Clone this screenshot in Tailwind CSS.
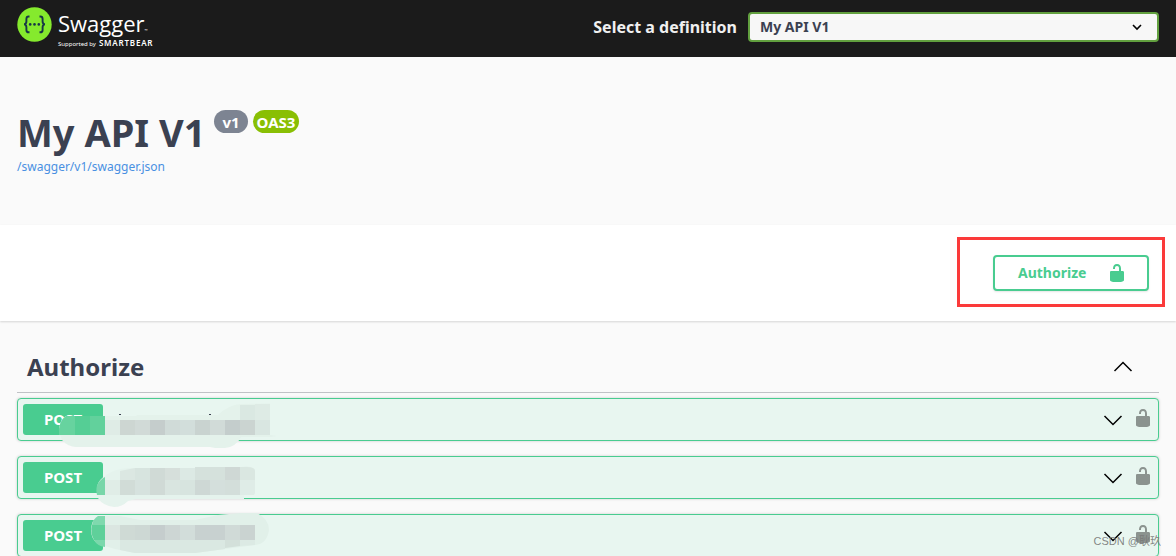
<!DOCTYPE html>
<html lang="en">
<head>
  <meta charset="UTF-8">
  <meta name="viewport" content="width=device-width, initial-scale=1">
  <title>Swagger UI</title>
  <script src="https://cdn.jsdelivr.net/npm/@tailwindcss/browser@4"></script>
</head>
<body class="relative h-screen overflow-hidden bg-[#fafafa] font-['Noto_Sans','Open_Sans',sans-serif] text-[#3b4151]">
  <svg class="hidden">
    <symbol id="unlocked" viewBox="0 0 20 20">
      <path d="M15.8 8H14V5.6C14 2.703 12.665 1 10 1 7.334 1 6 2.703 6 5.6V6h2v-.801C8 3.754 8.797 3 10 3c1.203 0 2 .754 2 2.199V8H4c-.553 0-1 .646-1 1.199V17c0 .549.428 1.139.951 1.307l1.197.387C5.672 18.861 6.55 19 7.1 19h5.8c.549 0 1.428-.139 1.951-.307l1.196-.387c.524-.167.953-.757.953-1.306V9.199C17 8.646 16.352 8 15.8 8z"/>
    </symbol>
    <symbol id="chevron-down" viewBox="0 0 20 20">
      <path d="M1.500 6 10 14.500l8.500-8.500" fill="none" stroke="currentColor" stroke-width="1.500"/>
    </symbol>
    <symbol id="chevron-up" viewBox="0 0 20 20">
      <path d="M1.500 14 10 5.500 18.500 14" fill="none" stroke="currentColor" stroke-width="1.500"/>
    </symbol>
  </svg>

  <header class="flex h-[57px] items-start justify-between bg-[#1b1b1b] px-[17px]">
    <a href="#" aria-label="Swagger" class="flex pt-[7px] text-white">
      <svg class="size-[35px]" viewBox="0 0 35 35">
        <circle cx="17.500" cy="17.500" r="17.200" fill="#85ea2d"/>
        <g fill="none" stroke="#173647" stroke-width="1.900">
          <path d="M12.500 9.500h-.8c-1.700 0-2.300.8-2.300 2.400v2.700c0 1.700-.6 2.600-2.300 2.800 1.700.2 2.300 1.100 2.300 2.800v2.700c0 1.600.6 2.400 2.300 2.400h.8"/>
          <path d="M22.500 9.500h.8c1.700 0 2.300.8 2.300 2.400v2.700c0 1.700.6 2.600 2.300 2.800-1.700.2-2.300 1.100-2.300 2.800v2.700c0 1.600-.6 2.400-2.300 2.400h-.8"/>
        </g>
        <g fill="#173647">
          <circle cx="13.200" cy="17.400" r="1.300"/>
          <circle cx="17.500" cy="17.400" r="1.300"/>
          <circle cx="21.800" cy="17.400" r="1.300"/>
        </g>
      </svg>
      <span class="flex flex-col pl-[6px] pt-[2px]">
        <span class="flex items-end font-['Open_Sans',sans-serif] text-[22px] leading-[28px]">Swagger<span class="text-[4px] leading-[12px]">™</span></span>
        <span class="flex items-baseline gap-[3px] leading-[12px]">
          <span class="text-[6px]">Supported by</span>
          <span class="text-[8px] font-semibold tracking-widest">SMARTBEAR</span>
        </span>
      </span>
    </a>
    <div class="flex items-center pt-[12px]">
      <label for="definition" class="pr-[11px] text-base font-bold text-[#f0f0f0]">Select a definition</label>
      <div class="relative">
        <select id="definition" class="h-[30px] w-[411px] appearance-none rounded-[4px] border-2 border-[#62a03f] bg-[#f7f7f7] px-[10px] text-sm font-bold">
          <option>My API V1</option>
        </select>
        <svg class="pointer-events-none absolute top-[10px] right-[17px] h-[10px] w-[10px] text-black" viewBox="0 0 10 10">
          <path d="M1 3l4 4 4-4" fill="none" stroke="currentColor" stroke-width="1.600"/>
        </svg>
      </div>
    </div>
  </header>

  <section class="h-[168px] px-[17px] pt-[50px]">
    <h1 class="flex items-start text-[38px] leading-[50px] font-bold">
      My API V1
      <span class="ml-[9px] mt-[3px] flex h-[23px] items-center rounded-full bg-[#7d8492] px-[8px] text-[15px] font-bold text-white">v1</span>
      <span class="ml-[5px] mt-[3px] flex h-[23px] items-center rounded-full bg-[#89bf04] px-[4px] text-[15px] font-bold text-white">OAS3</span>
    </h1>
    <a href="#" class="block text-xs leading-[20px] text-[#4990e2]">/swagger/v1/swagger.json</a>
  </section>

  <section class="flex h-[96px] items-start justify-end bg-white pt-[12px] pr-[11px] shadow-[0_1px_2px_rgba(0,0,0,0.15)]">
    <div class="border-[3px] border-[#fb3a3a] pt-[15px] pr-[13px] pb-[13px] pl-[33px]">
      <button class="flex h-[36px] w-[156px] items-center justify-between rounded-[4px] border-2 border-[#49cc90] bg-white pr-[20px] pl-[23px] text-sm font-bold text-[#49cc90] shadow-[0_1px_2px_rgba(0,0,0,0.1)]">
        Authorize
        <svg class="size-[20px] fill-current"><use href="#unlocked"/></svg>
      </button>
    </div>
  </section>

  <main class="px-[17px] pt-[20px]">
    <h2 class="flex h-[52px] items-center justify-between border-b border-[#c0c2c6] pr-[26px] pl-[10px] text-2xl font-bold">
      <a href="#">Authorize</a>
      <button aria-label="Collapse" class="text-black"><svg class="size-[20px]"><use href="#chevron-up"/></svg></button>
    </h2>

    <div class="flex flex-col gap-[15px] pt-[5px]">
      <div class="relative flex h-[43px] items-center rounded-[4px] border border-[#49cc90] bg-[#e8f6f0] pr-[5px] pl-[5px] shadow-[0_0_3px_rgba(0,0,0,0.19)]">
        <button class="h-[31px] w-[80px] rounded-[3px] bg-[#49cc90] text-[15px] font-bold text-white">POST</button>
        <button aria-label="Expand" class="ml-auto text-black"><svg class="size-[20px]"><use href="#chevron-down"/></svg></button>
        <button aria-label="Unlock" class="ml-[10px] pb-1"><svg class="size-[20px] fill-[#8b938f]"><use href="#unlocked"/></svg></button>
        <svg class="pointer-events-none absolute top-0 left-0 h-[50px] w-[260px]" viewBox="18 399 260 50">
          <path d="M119 414h2v1h-2zM209 414h2v1h-2z" fill="#3b4151"/>
          <path d="M66 416H136L137 415H218Q228 405 241 404L270 403.500V435L277 436L270 437H241Q236 447 225 448H215L210 447H76Q68 447 62 440L59 432Q59 420 66 416Z" fill="#e4f2eb"/>
          <path d="M66 416H75V435H59Q58 421 66 416Z" fill="#67d39f"/>
          <path d="M75 416h15v19h-15z" fill="#55ce95"/>
          <path d="M90 416h15v19h-15z" fill="#62d19c"/>
          <path d="M105 420h15v15h-15z" fill="#dfece6"/>
          <path d="M120 420h15v15h-15z" fill="#cdd6d2"/>
          <path d="M135 420h15v15h-15z" fill="#d1dad7"/>
          <path d="M150 420h15v15h-15z" fill="#c5cdcc"/>
          <path d="M165 420h15v15h-15z" fill="#d0dbd8"/>
          <path d="M180 420h15v15h-15z" fill="#d2dedb"/>
          <path d="M195 420h15v15h-15z" fill="#c9d3d0"/>
          <path d="M210 420h15v15h-15z" fill="#d1dbd8"/>
          <path d="M225 420h15v15h-15z" fill="#c4cdcc"/>
          <path d="M240 420h15v15h-15z" fill="#cbd4d1"/>
          <path d="M255 420h15v15h-15z" fill="#d9e6e1"/>
          <path d="M240 405h15v15h-15z" fill="#dae8e2"/>
          <path d="M255 404h15v16h-15z" fill="#deebe5"/>
        </svg>
      </div>

      <div class="relative flex h-[43px] items-center rounded-[4px] border border-[#49cc90] bg-[#e8f6f0] pr-[5px] pl-[5px] shadow-[0_0_3px_rgba(0,0,0,0.19)]">
        <button class="h-[31px] w-[80px] rounded-[3px] bg-[#49cc90] text-[15px] font-bold text-white">POST</button>
        <button aria-label="Expand" class="ml-auto text-black"><svg class="size-[20px]"><use href="#chevron-down"/></svg></button>
        <button aria-label="Unlock" class="ml-[10px] pb-1"><svg class="size-[20px] fill-[#8b938f]"><use href="#unlocked"/></svg></button>
        <svg class="pointer-events-none absolute top-0 left-0 h-[52px] w-[260px]" viewBox="18 457 260 52">
          <path d="M105 476Q114 469 127 468L195 468L210 467H240L247 466L255 469V494L244 495V499H136L128 501Q122 507 114 507Q103 506 98 498Q94 482 105 476Z" fill="#e5f3ed"/>
          <path d="M105 477V495H97Q94 483 105 477Z" fill="#78d6a9"/>
          <path d="M105 480h15v15h-15z" fill="#e0ede7"/>
          <path d="M120 471l15-3v12h-15z" fill="#dbe7e2"/>
          <path d="M135 468h15v12h-15z" fill="#d7e4df"/>
          <path d="M150 468h15v12h-15z" fill="#d0dad6"/>
          <path d="M165 468h15v12h-15z" fill="#d6dfdb"/>
          <path d="M180 468h15v12h-15z" fill="#dce9e4"/>
          <path d="M195 467h30v13h-30z" fill="#d5e1dc"/>
          <path d="M225 467h15v13h-15z" fill="#cfd8d5"/>
          <path d="M240 467h7q8 0 8 4v9h-15z" fill="#dae7e1"/>
          <path d="M120 480h15v15h-15z" fill="#d1dcd7"/>
          <path d="M135 480h15v15h-15z" fill="#d6e2de"/>
          <path d="M150 480h15v15h-15z" fill="#d0dad6"/>
          <path d="M165 480h15v15h-15z" fill="#d9e5e0"/>
          <path d="M180 480h15v15h-15z" fill="#d7e4df"/>
          <path d="M195 480h15v15h-15z" fill="#ced8d5"/>
          <path d="M210 480h15v15h-15z" fill="#d4dfdc"/>
          <path d="M225 480h15v15h-15z" fill="#d3deda"/>
          <path d="M240 480h15v13l-1 2h-14z" fill="#dfece7"/>
        </svg>
      </div>

      <div class="relative flex h-[43px] items-center rounded-[4px] border border-[#49cc90] bg-[#e8f6f0] pr-[5px] pl-[5px] shadow-[0_0_3px_rgba(0,0,0,0.19)]">
        <button class="h-[31px] w-[80px] rounded-[3px] bg-[#49cc90] text-[15px] font-bold text-white">POST</button>
        <button aria-label="Expand" class="ml-auto text-black"><svg class="size-[20px]"><use href="#chevron-down"/></svg></button>
        <button aria-label="Unlock" class="ml-[10px] pb-1"><svg class="size-[20px] fill-[#8b938f]"><use href="#unlocked"/></svg></button>
        <svg class="pointer-events-none absolute top-0 left-0 h-[41px] w-[260px] overflow-visible" viewBox="18 515 260 41">
          <path d="M98 516H120L140 520H195L218 515L240 513H257Q269 519 269 530Q267 544 255 545L240 547L210 551L195 553H135L115 549L105 546Q92 544 91 531Q91 520 98 516Z" fill="#e1f0e9"/>
          <path d="M98 516H105V525H92Q93 519 98 516Z" fill="#7fd9ae"/>
          <path d="M92 525H105V540H94Q90 533 92 525Z" fill="#5fd09a"/>
          <path d="M94 540H105V547Q97 546 94 540Z" fill="#7bd8ac"/>
          <path d="M105 525h15v15h-15z" fill="#dbe6e1"/>
          <path d="M120 525h15v15h-15z" fill="#cfdad5"/>
          <path d="M135 525h15v15h-15z" fill="#cdd8d4"/>
          <path d="M150 525h15v15h-15z" fill="#c5cdcd"/>
          <path d="M165 525h15v15h-15z" fill="#cdd6d4"/>
          <path d="M180 525h15v15h-15z" fill="#d2ddda"/>
          <path d="M195 525h30v15h-30z" fill="#c8d1d0"/>
          <path d="M225 525h15v15h-15z" fill="#d0dad7"/>
          <path d="M240 525h15v15h-15z" fill="#cad3d1"/>
          <path d="M120 540h105v9l-30 4h-60l-15-3z" fill="#dae8e2"/>
          <path d="M225 540h15v6l-15 2z" fill="#d3e0da"/>
          <path d="M240 540h15v5l-15 1z" fill="#dceae4"/>
        </svg>
      </div>
    </div>
  </main>

  <p class="absolute right-[15px] bottom-[6px] font-['Liberation_Sans','Noto_Sans_CJK_SC',sans-serif] text-[11px] leading-[18px] text-[#777]/90">CSDN @耿玖</p>
</body>
</html>
